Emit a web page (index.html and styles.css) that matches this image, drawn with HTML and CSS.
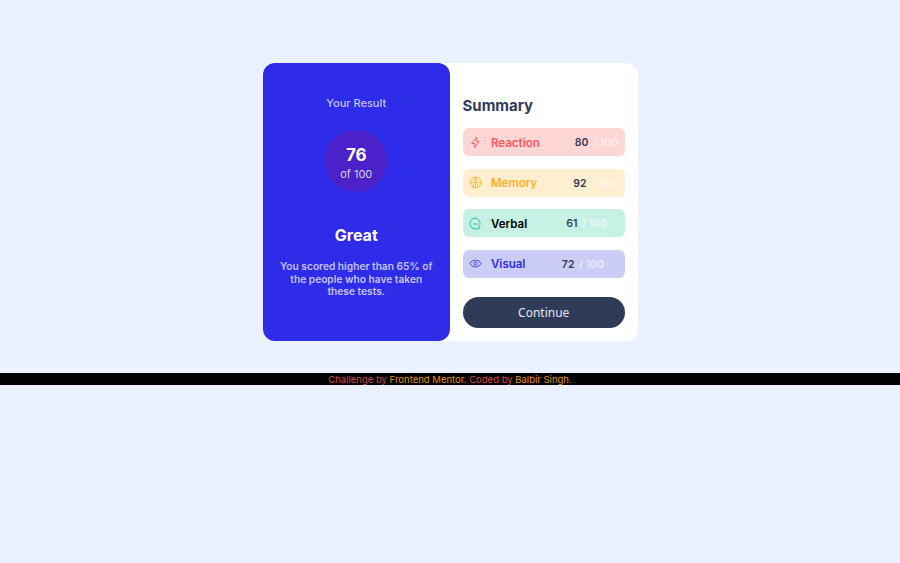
FILE: index.html
```html
<!DOCTYPE html>
<html>
<head>
  <link rel="stylesheet" href="styles.css">
</head>
<body>
  <main class="card">
    <section class="result">
      <h1 class="result-title">Your Result</h1>
      <div class="score-circle">
        <span class="score">76</span>
        <span class="score-of">of 100</span>
      </div>
      <h2 class="grade">Great</h2>
      <p class="blurb">You scored higher than 65% of the people who have taken these tests.</p>
    </section>
    <section class="summary">
      <h2 class="summary-title">Summary</h2>
      <div class="rows">
        <div class="row reaction">
          <svg class="icon" viewBox="0 0 20 20" fill="none" stroke="#ff5757" stroke-width="1.3" stroke-linejoin="round">
            <path d="M11.800 1.800 4.500 11.300h4.800l-1.300 7 7.500-9.800h-4.600z"/>
          </svg>
          <span class="label">Reaction</span>
          <span class="value">80 <span class="total">/ 100</span></span>
        </div>
        <div class="row memory">
          <svg class="icon" viewBox="0 0 20 20" fill="none" stroke="#ffb01f" stroke-width="1.3" stroke-linecap="round">
            <circle cx="10" cy="10" r="8.300"/>
            <path d="M10 2v16M10 6.500 7 4.500M10 6.500l3-2M10 11 6 9 2.500 10M10 11l4-2 3.500 1M6.500 17v-4.500M13.500 17v-4.500"/>
          </svg>
          <span class="label">Memory</span>
          <span class="value">92 <span class="total">/ 100</span></span>
        </div>
        <div class="row verbal">
          <svg class="icon" viewBox="0 0 20 20" fill="none" stroke="#00bb8f" stroke-width="1.3" stroke-linecap="round" stroke-linejoin="round">
            <path d="M10 1.700a8.300 8.300 0 1 0-.6 16.600c2 .2 4.300.3 6.800-.4-1-.8-1.300-1.700-1-2.800A8.300 8.300 0 0 0 10 1.700z"/>
            <path d="M6.800 10.800h6.400"/>
          </svg>
          <span class="label">Verbal</span>
          <span class="value">61 <span class="total">/ 100</span></span>
        </div>
        <div class="row visual">
          <svg class="icon" viewBox="0 0 20 20" fill="none" stroke="#2e2be9" stroke-width="1.300">
            <path d="M1.500 10c1.900-3.400 4.800-5.200 8.500-5.200s6.600 1.800 8.500 5.200c-1.900 3.400-4.800 5.200-8.500 5.200S3.400 13.400 1.500 10z"/>
            <circle cx="10" cy="10" r="2.500"/>
          </svg>
          <span class="label">Visual</span>
          <span class="value">72 <span class="total">/ 100</span></span>
        </div>
      </div>
      <button class="continue">Continue</button>
    </section>
  </main>
  <footer class="attribution">
    Challenge by <a href="#">Frontend Mentor</a>. Coded by <a href="#">Balbir Singh</a>.
  </footer>
</body>
</html>
```

FILE: styles.css
```css
body {
  margin: 0;
  min-height: 563px;
  background: #ebf1ff;
  font-family: "Inter", "Noto Sans", sans-serif;
  overflow: hidden;
}

.card {
  display: flex;
  width: 375px;
  height: 278.500px;
  margin: 62.500px auto 31.500px;
  background: white;
  border-radius: 12px;
}

.result {
  display: flex;
  flex-direction: column;
  align-items: center;
  box-sizing: border-box;
  width: 187.500px;
  padding: 33px 14px 0;
  background: #2e2be9;
  border-radius: 12px;
  text-align: center;
}

.result-title {
  margin: 0;
  font-size: 11px;
  line-height: 14px;
  font-weight: 500;
  color: #c4c3fb;
}

.score-circle {
  display: flex;
  flex-direction: column;
  align-items: center;
  justify-content: center;
  width: 62px;
  height: 62px;
  margin-top: 20.500px;
  background: #4d21c9;
  border-radius: 50%;
  color: white;
}

.score {
  margin-top: 3px;
  font-size: 17px;
  line-height: 22px;
  font-weight: 700;
}

.score-of {
  margin-top: 1px;
  font-size: 11px;
  line-height: 15px;
  color: #d5d4fb;
}

.grade {
  margin: 33px 0 0;
  font-size: 16px;
  line-height: 20px;
  font-weight: 700;
  color: white;
}

.blurb {
  margin: 15px 0 0;
  font-size: 10.200px;
  line-height: 12.500px;
  font-weight: 600;
  color: #c4c3fb;
}

.summary {
  flex: 1;
  box-sizing: border-box;
  padding: 33px 12.500px 0;
}

.summary-title {
  margin: 0;
  font-size: 15px;
  line-height: 20px;
  font-weight: 700;
  color: #303b5a;
}

.rows {
  display: flex;
  flex-direction: column;
  gap: 12.500px;
  margin-top: 12.500px;
}

.row {
  display: flex;
  align-items: center;
  height: 28px;
  padding: 0 6px;
  border-radius: 6px;
  font-size: 11.500px;
  font-weight: 600;
}

.icon {
  width: 13px;
  height: 13px;
  margin-right: 9.500px;
}

.label {
  padding-top: 1px;
}

.value {
  margin-left: auto;
  padding-top: 1px;
  font-size: 10.500px;
  color: #303b5a;
}

.total {
  margin-left: 2px;
  color: white;
  opacity: 0.6;
}

.reaction { background: #ffd6d6; color: #ff5757; }
.memory { background: #ffeecf; color: #ffb01f; }
.verbal { background: #c8f1e5; color: black; }
.visual { background: #cccdf6; color: #2e2be9; }

.reaction .value { margin-right: 1px; }
.memory .value { margin-right: 3px; }
.verbal .value { margin-right: 12px; }
.visual .value { margin-right: 15px; }

.continue {
  display: block;
  width: 100%;
  height: 31px;
  margin-top: 19px;
  border: none;
  border-radius: 16px;
  background: #303b5a;
  color: #e4e7ee;
  font-family: "Noto Sans", sans-serif;
  font-size: 12px;
}

.attribution {
  height: 12.500px;
  background: black;
  color: #d9484c;
  font-size: 9.500px;
  line-height: 13.500px;
  text-align: center;
}

.attribution a {
  color: #e0960f;
  text-decoration: none;
}
```
